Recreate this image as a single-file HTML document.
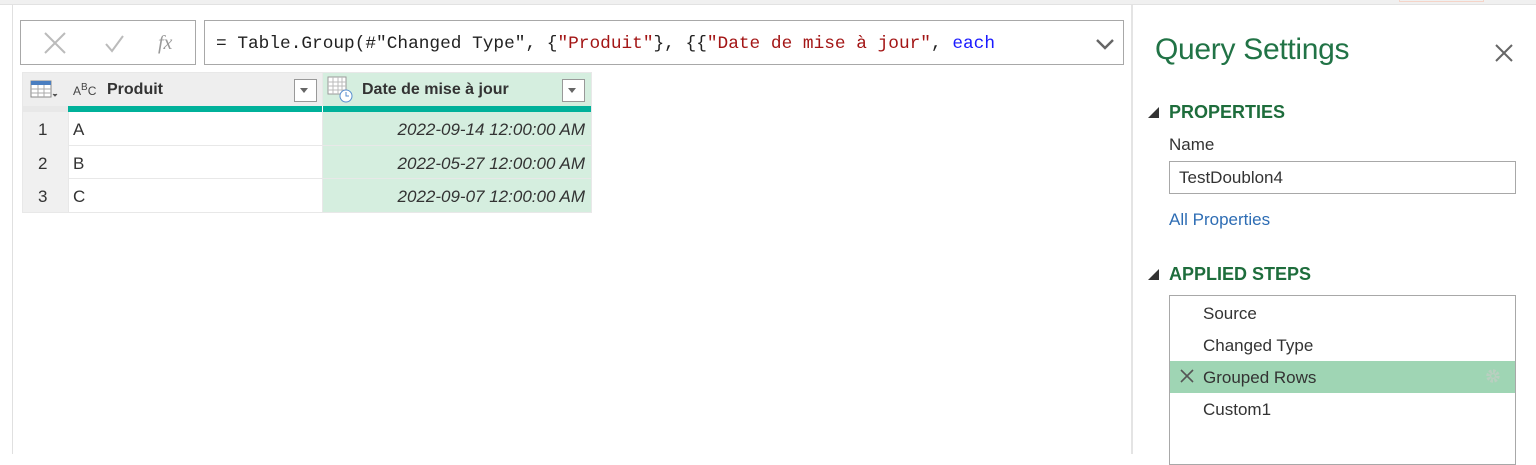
<!DOCTYPE html>
<html><head><meta charset="utf-8"><style>
*{box-sizing:border-box;margin:0;padding:0}
body{width:1536px;height:454px;background:#fff;position:relative;overflow:hidden;font-family:"Liberation Sans","DejaVu Sans",sans-serif}
.abs{position:absolute}
.top{left:0;top:0;width:1536px;height:5px;background:#f0f0f0;border-bottom:1px solid #e2e2e2}
.lb{left:12px;top:5px;width:1px;height:449px;background:#e0e0e0}
.rb{left:1131px;top:5px;width:2px;height:449px;background:#e4e4e4}
.box{border:1px solid #a8a8a8;background:#fff}
.mono{font-family:"Liberation Mono","DejaVu Sans Mono",monospace;font-size:17.8px;color:#222;white-space:pre}
.cell{position:absolute;font-size:17px;color:#333;line-height:33px;padding-top:2px}
.g{color:#1e6d3c;font-weight:bold;font-size:18px}
</style></head><body>
<div class="abs top"></div>
<div class="abs" style="left:1399px;top:0;width:85px;height:2px;border:1px solid #f5d4c8;border-top:none"></div>
<div class="abs lb"></div>
<div class="abs rb"></div>

<div class="abs box" style="left:20px;top:20px;width:176px;height:45px"></div>
<svg class="abs" style="left:40px;top:30px" width="150" height="26">
<path d="M5 3L25 23M25 3L5 23" stroke="#bbb" stroke-width="2"/>
<path d="M66 14l6 7 11-15" stroke="#bbb" stroke-width="2" fill="none"/>
<text x="118" y="19" font-family="Liberation Serif,serif" font-style="italic" font-size="20" fill="#999">fx</text>
</svg>
<div class="abs box" style="left:204px;top:20px;width:920px;height:45px"></div>
<div class="abs mono" style="left:216px;top:34px">= Table.Group(#"Changed Type", {<span style="color:#a31515">"Produit"</span>}, {{<span style="color:#a31515">"Date de mise à jour"</span>, <span style="color:#1a1aff">each</span></div>
<svg class="abs" style="left:1095px;top:37px" width="20" height="14"><path d="M2 3l8 8 8-8" stroke="#666" stroke-width="2.4" fill="none"/></svg>

<!-- table -->
<div class="abs" style="left:22px;top:72px;width:570px;height:141px;background:#e8e8e8"></div>
<div class="abs" style="left:23px;top:73px;width:299px;height:33px;background:#eeeeee"></div>
<div class="abs" style="left:323px;top:73px;width:268px;height:33px;background:#d5eedf"></div>
<div class="abs" style="left:68px;top:106px;width:523px;height:6px;background:#00b19a"></div>
<div class="abs" style="left:322px;top:106px;width:1px;height:6px;background:#fff"></div>
<svg class="abs" style="left:30px;top:80px" width="36" height="20">
<rect x="1" y="1" width="20" height="16" fill="#fff" stroke="#888"/><rect x="1" y="1" width="20" height="4" fill="#4a7ec0"/>
<path d="M1 9h20M1 13h20M8 5v12M14 5v12" stroke="#aaa"/><path d="M23 14l2 2 2-2" fill="#555" stroke="#555"/>
</svg>
<div class="abs" style="left:73px;top:82px;font-size:12px;color:#444">A<sup style="font-size:10px">B</sup>C</div>
<div class="abs" style="left:107px;top:81px;font-size:16px;font-weight:bold;color:#333">Produit</div>
<div class="abs" style="left:294px;top:79px;width:23px;height:23px;border:1px solid #999;background:#fff"></div>
<svg class="abs" style="left:300px;top:88px" width="10" height="6"><path d="M0 0h8l-4 5z" fill="#666"/></svg>
<svg class="abs" style="left:327px;top:76px" width="28" height="28"><rect x="1" y="1" width="18" height="17" fill="#fff" stroke="#999"/><path d="M1 6h18M1 10h18M1 14h18M6 1v17M11 1v17M15 1v17" stroke="#bbb"/><circle cx="19" cy="20" r="6" fill="#fff" stroke="#5a8fd0"/><path d="M19 16v4h3" stroke="#5a8fd0" fill="none"/></svg>
<div class="abs" style="left:362px;top:81px;font-size:16px;font-weight:bold;color:#333">Date de mise à jour</div>
<div class="abs" style="left:562px;top:79px;width:23px;height:23px;border:1px solid #999;background:#fff"></div>
<svg class="abs" style="left:568px;top:88px" width="10" height="6"><path d="M0 0h8l-4 5z" fill="#666"/></svg>

<div class="abs" style="left:23px;top:112px;width:45px;height:100px;background:#f0f0f0"></div>
<div class="abs" style="left:69px;top:112px;width:253px;height:33px;background:#fff"></div>
<div class="abs" style="left:69px;top:146px;width:253px;height:32px;background:#fff"></div>
<div class="abs" style="left:69px;top:179px;width:253px;height:33px;background:#fff"></div>
<div class="abs" style="left:323px;top:112px;width:268px;height:33px;background:#d5eedf"></div>
<div class="abs" style="left:323px;top:146px;width:268px;height:32px;background:#d5eedf"></div>
<div class="abs" style="left:323px;top:179px;width:268px;height:33px;background:#d5eedf"></div>
<div class="cell" style="left:38px;top:111px">1</div><div class="cell" style="left:73px;top:111px">A</div>
<div class="cell" style="left:38px;top:145px">2</div><div class="cell" style="left:73px;top:145px">B</div>
<div class="cell" style="left:38px;top:178px">3</div><div class="cell" style="left:73px;top:178px">C</div>
<div class="cell" style="left:323px;width:262px;text-align:right;top:111px;font-style:italic">2022-09-14 12:00:00 AM</div>
<div class="cell" style="left:323px;width:262px;text-align:right;top:145px;font-style:italic">2022-05-27 12:00:00 AM</div>
<div class="cell" style="left:323px;width:262px;text-align:right;top:178px;font-style:italic">2022-09-07 12:00:00 AM</div>

<!-- right panel -->
<div class="abs" style="left:1155px;top:33px;font-size:30px;color:#217346;letter-spacing:-0.3px">Query Settings</div>
<svg class="abs" style="left:1494px;top:43px" width="20" height="20"><path d="M2 2L18 18M18 2L2 18" stroke="#666" stroke-width="2"/></svg>
<svg class="abs" style="left:1147px;top:106px" width="14" height="14"><path d="M12 1v11H1z" fill="#333"/></svg>
<div class="abs g" style="left:1169px;top:102px">PROPERTIES</div>
<div class="abs" style="left:1169px;top:135px;font-size:17px;color:#333">Name</div>
<div class="abs box" style="left:1169px;top:161px;width:347px;height:33px;font-size:17px;color:#333;padding:6px 9px">TestDoublon4</div>
<div class="abs" style="left:1169px;top:210px;font-size:17px;color:#2e6db4">All Properties</div>
<svg class="abs" style="left:1147px;top:268px" width="14" height="14"><path d="M12 1v11H1z" fill="#333"/></svg>
<div class="abs g" style="left:1169px;top:264px">APPLIED STEPS</div>
<div class="abs box" style="left:1169px;top:295px;width:347px;height:170px"></div>
<div class="abs" style="left:1203px;top:304px;font-size:17px;color:#333">Source</div>
<div class="abs" style="left:1203px;top:336px;font-size:17px;color:#333">Changed Type</div>
<div class="abs" style="left:1170px;top:361px;width:345px;height:32px;background:#9fd5b4"></div>
<svg class="abs" style="left:1179px;top:368px" width="16" height="16"><path d="M2 2L14 14M14 2L2 14" stroke="#555" stroke-width="1.6"/></svg>
<div class="abs" style="left:1203px;top:368px;font-size:17px;color:#333">Grouped Rows</div>
<svg class="abs" style="left:1484px;top:367px" width="18" height="18"><circle cx="9" cy="9" r="5" fill="none" stroke="#b9cfc0" stroke-width="3.5" stroke-dasharray="2.5 1.4"/><circle cx="9" cy="9" r="2.5" fill="none" stroke="#b9cfc0" stroke-width="1.5"/></svg>
<div class="abs" style="left:1203px;top:400px;font-size:17px;color:#333">Custom1</div>
</body></html>
